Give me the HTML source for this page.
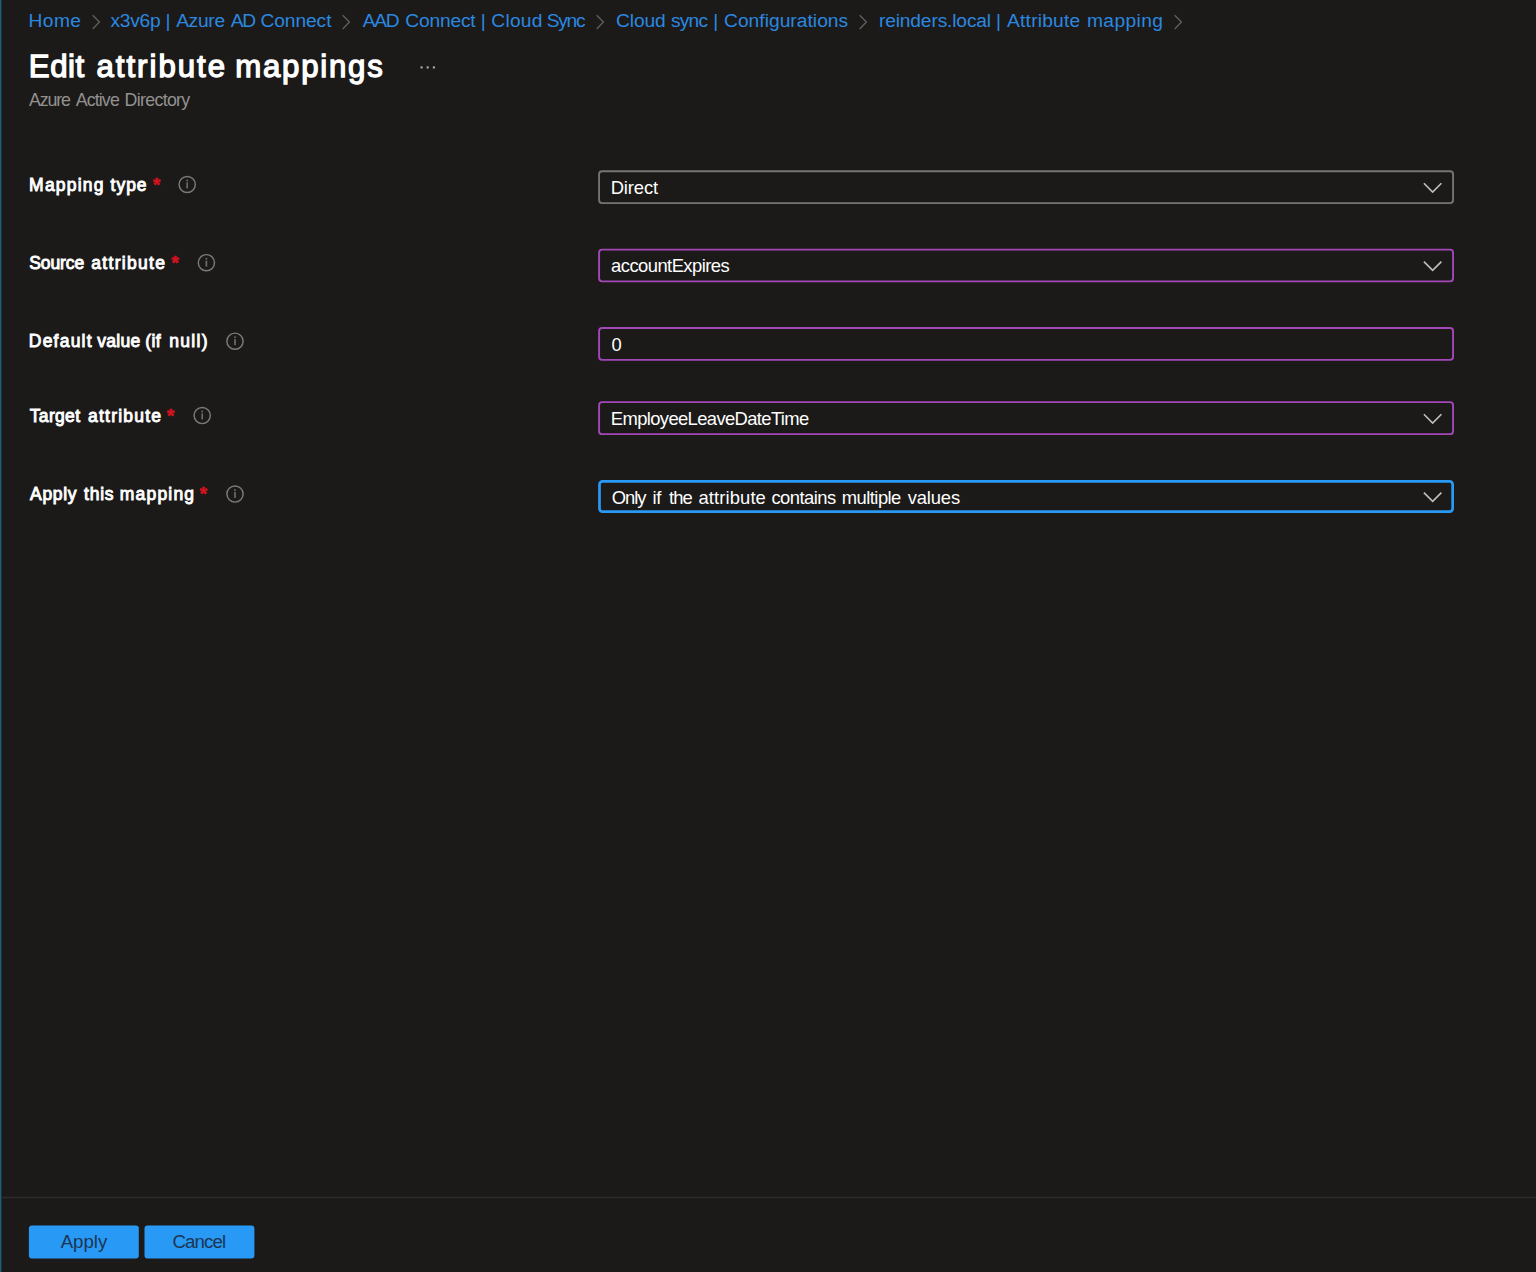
<!DOCTYPE html>
<html lang="en">
<head>
<meta charset="utf-8">
<title>Edit attribute mappings</title>
<style>
html,body{margin:0;padding:0;background:#1b1a19;}
body{width:1536px;height:1272px;position:relative;overflow:hidden;font-family:"Liberation Sans",sans-serif;color:#fff;}
.edge{position:absolute;left:0;top:0;width:2px;height:1272px;background:linear-gradient(90deg,#1b6184 0,#1b6184 1px,#1b2f3a 1px,#1b2f3a 100%);}
.abs{position:absolute;white-space:nowrap;}
.bc{top:10.15px;height:22px;line-height:22px;font-size:19.2px;color:#2b88e0;}
.title{left:29.7px;top:46px;font-size:31.2px;font-weight:normal;-webkit-text-stroke:1.3px #fff;line-height:42px;color:#fff;}
.sub{left:29px;top:89.7px;font-size:17.8px;line-height:20px;color:#939190;}
.lbl{left:29.4px;font-size:17.5px;font-weight:normal;-webkit-text-stroke:0.9px #fff;line-height:22px;color:#fff;}
.star{width:12px;text-align:center;font-size:18.5px;font-weight:bold;line-height:18px;height:14px;overflow:hidden;color:#d1121f;-webkit-text-stroke:0.7px #d1121f;}
.val{left:611.4px;font-size:18.4px;line-height:22px;color:#fff;}
.hr{position:absolute;left:2px;right:0;top:1197px;height:1px;background:#2c2b29;box-shadow:0 1px 0 #201e1e,0 -1px 0 #201e1e;}
.btn{position:absolute;top:1226px;height:32px;width:110px;color:#1c3554;font-size:18.7px;line-height:32px;text-align:center;white-space:nowrap;}
</style>
</head>
<body>
<div class="edge"></div>

<div class="abs bc" style="left:29px" id="b1"><span class="w" style="letter-spacing:0.40px;margin-left:-0.41px">Home</span></div>
<div class="abs bc" style="left:110px" id="b2"><span class="w" style="letter-spacing:-0.24px;margin-left:0.44px">x3v6p</span> <span class="w" style="letter-spacing:0.00px;margin-left:-0.25px">|</span> <span class="w" style="letter-spacing:-0.30px;margin-left:0.25px">Azure</span> <span class="w" style="letter-spacing:-1.30px;margin-left:0.56px">AD</span> <span class="w" style="letter-spacing:-0.06px;margin-left:0.34px">Connect</span></div>
<div class="abs bc" style="left:362px" id="b3"><span class="w" style="letter-spacing:-1.20px;margin-left:0.67px">AAD</span> <span class="w" style="letter-spacing:-0.18px;margin-left:1.44px">Connect</span> <span class="w" style="letter-spacing:0.00px;margin-left:-0.01px">|</span> <span class="w" style="letter-spacing:0.23px;margin-left:0.15px">Cloud</span> <span class="w" style="letter-spacing:-1.30px;margin-left:-1.16px">Sync</span></div>
<div class="abs bc" style="left:616px" id="b4"><span class="w" style="letter-spacing:-0.09px;margin-left:-0.06px">Cloud</span> <span class="w" style="letter-spacing:-0.79px;margin-left:-0.06px">sync</span> <span class="w" style="letter-spacing:0.00px;margin-left:0.67px">|</span> <span class="w" style="letter-spacing:0.03px;margin-left:0.46px">Configurations</span></div>
<div class="abs bc" style="left:879px" id="b5"><span class="w" style="letter-spacing:-0.15px;margin-left:-0.06px">reinders.local</span> <span class="w" style="letter-spacing:0.00px;margin-left:-0.35px">|</span> <span class="w" style="letter-spacing:0.22px;margin-left:0.72px">Attribute</span> <span class="w" style="letter-spacing:0.41px;margin-left:1.17px">mapping</span></div>

<div class="abs title" id="title"><span class="w" style="letter-spacing:0.56px;margin-left:-0.88px">Edit</span> <span class="w" style="letter-spacing:1.99px;margin-left:2.97px">attribute</span> <span class="w" style="letter-spacing:1.75px;margin-left:-0.43px">mappings</span></div>
<div class="abs sub" id="sub"><span class="w" style="letter-spacing:-1.12px;margin-left:-0.09px">Azure</span> <span class="w" style="letter-spacing:-0.86px;margin-left:0.93px">Active</span> <span class="w" style="letter-spacing:-0.68px;margin-left:0.69px">Directory</span></div>

<div class="abs lbl" style="top:173.6px" id="l1"><span class="w" style="letter-spacing:1.20px;margin-left:-0.29px">Mapping</span> <span class="w" style="letter-spacing:0.97px;margin-left:1.10px">type</span></div>
<div class="abs lbl" style="top:251.8px" id="l2"><span class="w" style="letter-spacing:-0.07px;margin-left:-0.28px">Source</span> <span class="w" style="letter-spacing:1.30px;margin-left:2.29px">attribute</span></div>
<div class="abs lbl" style="top:330.3px" id="l3"><span class="w" style="letter-spacing:1.21px;margin-left:-0.57px">Default</span> <span class="w" style="letter-spacing:0.25px;margin-left:-0.33px">value</span> <span class="w" style="letter-spacing:0.32px;margin-left:0.09px">(if</span> <span class="w" style="letter-spacing:1.36px;margin-left:3.38px">null)</span></div>
<div class="abs lbl" style="top:404.6px" id="l4"><span class="w" style="letter-spacing:0.32px;margin-left:0.39px">Target</span> <span class="w" style="letter-spacing:1.23px;margin-left:2.80px">attribute</span></div>
<div class="abs lbl" style="top:483.1px" id="l5"><span class="w" style="letter-spacing:0.69px;margin-left:0.66px">Apply</span> <span class="w" style="letter-spacing:0.79px;margin-left:1.87px">this</span> <span class="w" style="letter-spacing:1.20px;margin-left:0.47px">mapping</span></div>


<div class="abs val" style="top:176.9px" id="v1"><span class="w" style="letter-spacing:-0.09px;margin-left:-0.78px">Direct</span></div>
<div class="abs val" style="top:255.3px" id="v2"><span class="w" style="letter-spacing:-0.55px;margin-left:-0.30px">accountExpires</span></div>
<div class="abs val" style="top:333.9px" id="v3"><span class="w" style="letter-spacing:0.00px;margin-left:0.22px">0</span></div>
<div class="abs val" style="top:408.0px" id="v4"><span class="w" style="letter-spacing:-0.63px;margin-left:-0.54px">EmployeeLeaveDateTime</span></div>
<div class="abs val" style="top:486.5px" id="v5"><span class="w" style="letter-spacing:-1.02px;margin-left:0.37px">Only</span> <span class="w" style="letter-spacing:-0.36px;margin-left:1.80px">if</span> <span class="w" style="letter-spacing:-0.89px;margin-left:3.01px">the</span> <span class="w" style="letter-spacing:0.11px;margin-left:1.48px">attribute</span> <span class="w" style="letter-spacing:-0.54px;margin-left:0.35px">contains</span> <span class="w" style="letter-spacing:-0.55px;margin-left:1.07px">multiple</span> <span class="w" style="letter-spacing:-0.14px;margin-left:1.74px">values</span></div>

<svg class="ov" width="1536" height="1272" viewBox="0 0 1536 1272" style="position:absolute;left:0;top:0">
<path d="M92.7 15.2 L99.4 22.1 L92.7 29" fill="none" stroke="#605e5c" stroke-width="1.4"/>
<path d="M342.7 15.2 L349.4 22.1 L342.7 29" fill="none" stroke="#605e5c" stroke-width="1.4"/>
<path d="M596.7 15.2 L603.4 22.1 L596.7 29" fill="none" stroke="#605e5c" stroke-width="1.4"/>
<path d="M859.7 15.2 L866.4 22.1 L859.7 29" fill="none" stroke="#605e5c" stroke-width="1.4"/>
<path d="M1174.7 15.2 L1181.4 22.1 L1174.7 29" fill="none" stroke="#605e5c" stroke-width="1.4"/>
<rect x="599.075" y="171.225" width="854.000" height="31.850" rx="3" fill="none" stroke="#777573" stroke-width="1.85"/>
<rect x="599.100" y="249.650" width="853.950" height="31.700" rx="3" fill="none" stroke="#a347b8" stroke-width="1.90"/>
<rect x="599.100" y="328.050" width="853.950" height="31.800" rx="3" fill="none" stroke="#a347b8" stroke-width="1.90"/>
<rect x="599.100" y="402.150" width="853.950" height="32.000" rx="3" fill="none" stroke="#a347b8" stroke-width="1.90"/>
<rect x="599.500" y="481.400" width="853.150" height="30.150" rx="3" fill="none" stroke="#2899f5" stroke-width="2.70"/>
<path d="M1423.9 183.25 L1432.65 192.00 L1441.4 183.25" fill="none" stroke="#bfbdbb" stroke-width="1.7"/>
<path d="M1423.9 261.60 L1432.65 270.35 L1441.4 261.60" fill="none" stroke="#bfbdbb" stroke-width="1.7"/>
<path d="M1423.9 414.25 L1432.65 423.00 L1441.4 414.25" fill="none" stroke="#bfbdbb" stroke-width="1.7"/>
<path d="M1423.9 492.58 L1432.65 501.33 L1441.4 492.58" fill="none" stroke="#bfbdbb" stroke-width="1.7"/>
<g><circle cx="187.2" cy="184.5" r="8.1" fill="none" stroke="#7c7a78" stroke-width="1.45"/><rect x="186.35" y="182.40" width="1.7" height="6.0" fill="#6c6a68"/><rect x="186.35" y="179.65" width="1.7" height="1.7" fill="#6c6a68"/></g>
<g><circle cx="206.4" cy="262.7" r="8.1" fill="none" stroke="#7c7a78" stroke-width="1.45"/><rect x="205.55" y="260.60" width="1.7" height="6.0" fill="#6c6a68"/><rect x="205.55" y="257.85" width="1.7" height="1.7" fill="#6c6a68"/></g>
<g><circle cx="235.0" cy="341.2" r="8.1" fill="none" stroke="#7c7a78" stroke-width="1.45"/><rect x="234.15" y="339.10" width="1.7" height="6.0" fill="#6c6a68"/><rect x="234.15" y="336.35" width="1.7" height="1.7" fill="#6c6a68"/></g>
<g><circle cx="202.2" cy="415.5" r="8.1" fill="none" stroke="#7c7a78" stroke-width="1.45"/><rect x="201.35" y="413.40" width="1.7" height="6.0" fill="#6c6a68"/><rect x="201.35" y="410.65" width="1.7" height="1.7" fill="#6c6a68"/></g>
<g><circle cx="235.0" cy="494.0" r="8.1" fill="none" stroke="#7c7a78" stroke-width="1.45"/><rect x="234.15" y="491.90" width="1.7" height="6.0" fill="#6c6a68"/><rect x="234.15" y="489.15" width="1.7" height="1.7" fill="#6c6a68"/></g>
<rect x="420.5" y="66.3" width="2.2" height="2.2" rx="0.6" fill="#a8a6a4"/><rect x="426.6" y="66.3" width="2.2" height="2.2" rx="0.6" fill="#a8a6a4"/><rect x="432.8" y="66.3" width="2.2" height="2.2" rx="0.6" fill="#a8a6a4"/>
<rect x="28.9" y="1225.6" width="109.9" height="33" rx="3" fill="#2899f5"/><rect x="144.5" y="1225.6" width="109.9" height="33" rx="3" fill="#2899f5"/>
</svg>
<div class="abs star" style="left:150.5px;top:175.6px">*</div>
<div class="abs star" style="left:169.0px;top:254.0px">*</div>
<div class="abs star" style="left:164.6px;top:406.8px">*</div>
<div class="abs star" style="left:197.4px;top:484.8px">*</div>
<div class="hr"></div>
<div class="btn" style="left:29px" id="apply"><span class="w" style="letter-spacing:-0.04px;margin-left:-0.15px">Apply</span></div>
<div class="btn" style="left:144.5px" id="cancel"><span class="w" style="letter-spacing:-0.91px;margin-left:-1.37px">Cancel</span></div>
</body>
</html>
